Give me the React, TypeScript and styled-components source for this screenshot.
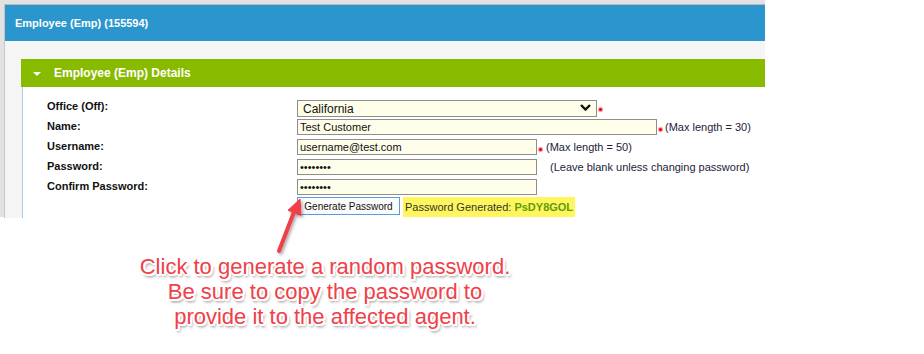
import React from 'react';
import styled, { createGlobalStyle } from 'styled-components';

const GlobalStyle = createGlobalStyle`
    body {
        margin: 0;
        background: #ffffff;
        font-family: "Liberation Sans", Arial, sans-serif;
    }
`;

const Page = styled.div`
    position: relative;
    width: 924px;
    height: 354px;
    overflow: hidden;
    background: #ffffff;
`;

const Frame = styled.div`
    width: 761px;
    height: 213px;
    padding: 4px 0 0 4px;
    background: #e2e2e2;
`;

const Window = styled.div`
    height: 100%;
    border-top: 1px solid #b9b9b9;
    border-left: 1px solid #c6c6c6;
    background: #f5f5f5;
    overflow: hidden;
`;

const TitleBar = styled.div`
    height: 36px;
    display: flex;
    align-items: center;
    padding-left: 10px;
    background: #2b96cd;
    color: #ffffff;
    font-size: 11px;
    font-weight: 700;
`;

const Body = styled.div`
    padding: 18px 0 0 16px;
`;

const SectionHeader = styled.div`
    height: 28px;
    display: flex;
    align-items: center;
    gap: 13px;
    padding-left: 12px;
    background: #88bb00;
    color: #ffffff;
    font-size: 12px;
    font-weight: 700;
`;

const Caret = styled.span`
    width: 0;
    height: 0;
    border-left: 4px solid transparent;
    border-right: 4px solid transparent;
    border-top: 4px solid #ffffff;
    margin-top: 1px;
`;

const SectionContent = styled.div`
    margin-left: 1px;
    height: 200px;
    padding: 10px 0 0 24px;
    background: #ffffff;
    border-left: 1px solid #a9cbe6;
`;

const Row = styled.div`
    display: grid;
    grid-template-columns: 250px 1fr;
    align-items: center;
    height: 20px;
`;

const Label = styled.label`
    font-size: 11px;
    font-weight: 700;
    color: #111111;
    margin-top: -2px;
`;

const Field = styled.div`
    display: flex;
    align-items: center;
    height: 20px;
`;

const TextInput = styled.input<{ $width: number }>`
    box-sizing: border-box;
    width: ${(p) => p.$width}px;
    height: 16px;
    margin: 0;
    padding: 0 2px;
    border: 1px solid #8e8e8e;
    background: #fefeea;
    font-family: "Liberation Sans", Arial, sans-serif;
    font-size: 11px;
    color: #111111;
    outline: none;
`;

const SelectWrap = styled.div`
    position: relative;
    width: 300px;
    height: 17px;
`;

const Select = styled.select`
    box-sizing: border-box;
    width: 100%;
    height: 17px;
    margin: 0;
    padding: 0 0 0 5px;
    border: 1px solid #8e8e8e;
    border-radius: 0;
    background: #fefeea;
    appearance: none;
    font-family: "Liberation Sans", Arial, sans-serif;
    font-size: 12px;
    color: #111111;
    outline: none;
`;

const Chevron = styled.svg`
    position: absolute;
    right: 6px;
    top: 5px;
    pointer-events: none;
`;

const Required = styled.span`
    display: inline-block;
    width: 3px;
    height: 3px;
    margin: 4px 0 0 2px;
    border-radius: 50%;
    background: #ee0000;
    box-shadow: 0 0 1px 1px rgba(255, 60, 90, 0.6);
`;

const Note = styled.span<{ $gap?: number }>`
    margin-left: ${(p) => p.$gap ?? 4}px;
    font-size: 11px;
    color: #22223a;
    white-space: nowrap;
`;

const GenerateButton = styled.button`
    box-sizing: border-box;
    width: 103px;
    height: 18px;
    margin: 0 3px 0 0;
    padding: 0;
    border: 1px solid #5a9be0;
    background: #fbfbfb;
    font-family: "Liberation Sans", Arial, sans-serif;
    font-size: 10px;
    color: #111111;
    align-self: flex-start;
`;

const Generated = styled.div`
    height: 20px;
    width: 170px;
    display: flex;
    align-items: center;
    padding-left: 2px;
    background: #fef65c;
    font-size: 11px;
    color: #333333;
    white-space: nowrap;
    strong {
        margin-left: 3px;
        color: #5e9c10;
    }
`;

const Callout = styled.div`
    width: 650px;
    margin-top: 37px;
    text-align: center;
    font-size: 22px;
    line-height: 25px;
    color: #f0404a;
    text-shadow:
        -1px -1px 0 #fff, 1px -1px 0 #fff, -1px 1px 0 #fff, 1px 1px 0 #fff,
        0 -2px 0 #fff, 0 2px 0 #fff, -2px 0 0 #fff, 2px 0 0 #fff,
        2px 2px 0 #fff,
        2px 3px 3px rgba(0, 0, 0, 0.55);
`;

const Overlay = styled.svg`
    position: absolute;
    left: 0;
    top: 0;
    pointer-events: none;
`;

function App() {
    return (
        <Page>
            <GlobalStyle />
            <Frame>
                <Window>
                    <TitleBar>Employee (Emp) (155594)</TitleBar>
                    <Body>
                        <SectionHeader>
                            <Caret />
                            Employee (Emp) Details
                        </SectionHeader>
                        <SectionContent>
                            <Row>
                                <Label>Office (Off):</Label>
                                <Field>
                                    <SelectWrap>
                                        <Select defaultValue="California">
                                            <option>California</option>
                                        </Select>
                                        <Chevron width="11" height="7" viewBox="0 0 11 7">
                                            <path d="M1 1l4.5 4.5 4.5-4.5" fill="none" stroke="#111" strokeWidth="2.4" />
                                        </Chevron>
                                    </SelectWrap>
                                    <Required />
                                </Field>
                            </Row>
                            <Row>
                                <Label>Name:</Label>
                                <Field>
                                    <TextInput $width={360} defaultValue="Test Customer" />
                                    <Required />
                                    <Note $gap={3}>(Max length = 30)</Note>
                                </Field>
                            </Row>
                            <Row>
                                <Label>Username:</Label>
                                <Field>
                                    <TextInput $width={240} defaultValue="username@test.com" />
                                    <Required />
                                    <Note $gap={4}>(Max length = 50)</Note>
                                </Field>
                            </Row>
                            <Row>
                                <Label>Password:</Label>
                                <Field>
                                    <TextInput $width={240} type="password" defaultValue="12345678" />
                                    <Note $gap={13}>(Leave blank unless changing password)</Note>
                                </Field>
                            </Row>
                            <Row>
                                <Label>Confirm Password:</Label>
                                <Field>
                                    <TextInput $width={240} type="password" defaultValue="12345678" />
                                </Field>
                            </Row>
                            <Row>
                                <span />
                                <Field>
                                    <GenerateButton>Generate Password</GenerateButton>
                                    <Generated>
                                        Password Generated: <strong>PsDY8GOL</strong>
                                    </Generated>
                                </Field>
                            </Row>
                        </SectionContent>
                    </Body>
                </Window>
            </Frame>
            <Callout>
                Click to generate a random password.
                <br />
                Be sure to copy the password to
                <br />
                provide it to the affected agent.
            </Callout>
            <Overlay width="924" height="354" viewBox="0 0 924 354">
                <defs>
                    <filter id="arrowShadow" x="-50%" y="-50%" width="200%" height="200%">
                        <feDropShadow dx="1.5" dy="2" stdDeviation="1.5" floodColor="#000" floodOpacity="0.35" />
                    </filter>
                </defs>
                <g filter="url(#arrowShadow)" fill="#ef3f47" stroke="#ef3f47">
                    <line x1="279" y1="251" x2="294" y2="212" strokeWidth="4" strokeLinecap="round" />
                    <polygon points="300,199 301,215.5 288,210.3" strokeWidth="1" strokeLinejoin="round" />
                </g>
            </Overlay>
        </Page>
    );
}

export default App;
